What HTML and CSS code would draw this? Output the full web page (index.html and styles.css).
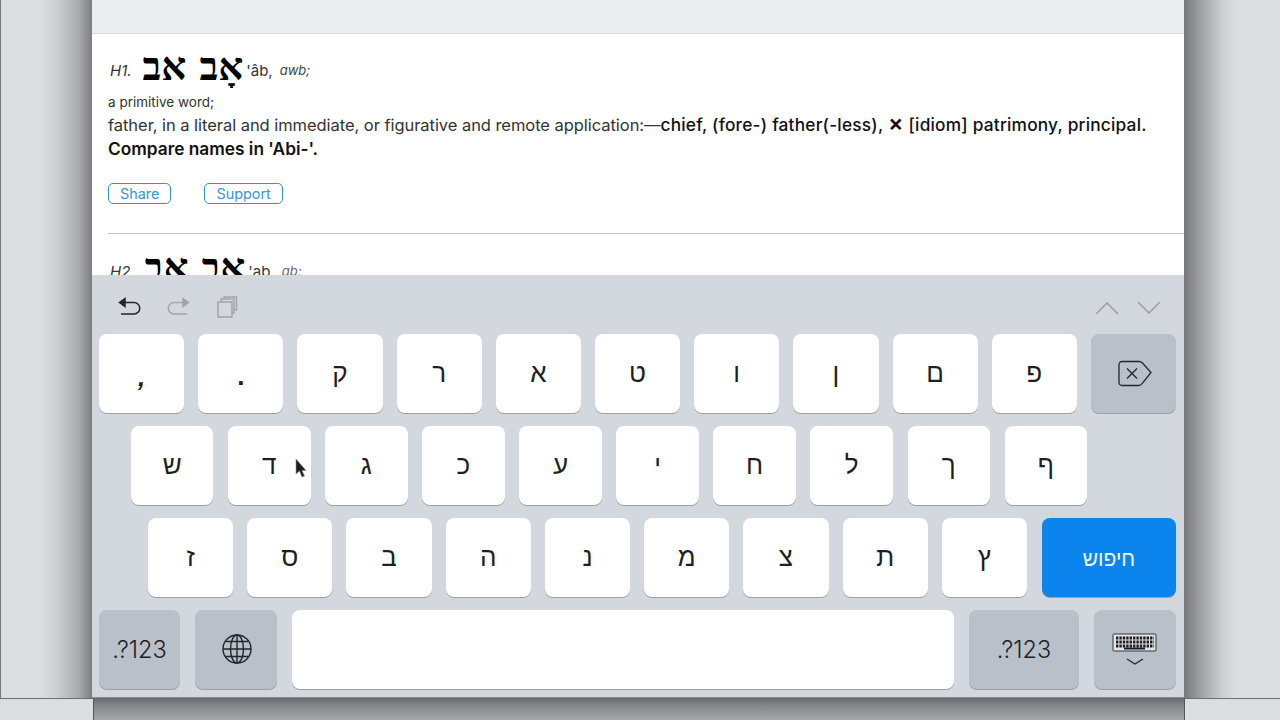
FILE: index.html
```html
<!DOCTYPE html>
<html lang="en">
<head>
<meta charset="utf-8">
<title>Hebrew lexicon</title>
<link rel="stylesheet" href="styles.css">
</head>
<body>
<div class="page">
  <div class="upper">
    <div class="gutter gutter-left"></div>
    <main class="window">
      <section class="results">
        <div class="search-strip"></div>
        <article class="entry entry-first">
          <h2 class="headword">
            <span class="ref">H1.</span>
            <span class="hebrew"><span>אב</span><span>אָב</span></span>
            <span class="translit">'âb,</span>
            <span class="pron">awb;</span>
          </h2>
          <p class="origin">a primitive word;</p>
          <p class="definition">father, in a literal and immediate, or figurative and remote application:—<span class="usage">chief, (fore-) father(-less), <span class="mult">×</span> [idiom] patrimony, principal.</span> <strong>Compare names in 'Abi-'.</strong></p>
          <div class="actions">
            <a class="pill pill-share">Share</a>
            <a class="pill pill-support">Support</a>
          </div>
        </article>
        <article class="entry entry-second">
          <h2 class="headword">
            <span class="ref">H2.</span>
            <span class="hebrew"><span>אב</span><span>אב</span></span>
            <span class="translit">'ab,</span>
            <span class="pron">ab;</span>
          </h2>
        </article>
      </section>
      <section class="keyboard">
        <div class="toolbar">
          <div class="tool-group">
            <svg class="tool" width="26" height="26" viewBox="0 0 26 26" fill="none" stroke="#23262b" stroke-width="1.5"><path d="M4 8.500H18a5.500 5.500 0 0 1 0 11.500H5"/><path d="M9 4.500 3.500 8.500 9 12.500z" fill="#23262b"/></svg>
            <svg class="tool" width="26" height="26" viewBox="0 0 26 26" fill="none" stroke="#a2a5aa" stroke-width="1.5"><path d="M22 8.500H8a5.500 5.500 0 0 0 0 11.500H21"/><path d="M17 4.500 22.500 8.500 17 12.500z" fill="#a2a5aa"/></svg>
            <svg class="tool tool-copy" width="26" height="26" viewBox="0 0 26 26" fill="none" stroke="#a2a5aa" stroke-width="1.5"><rect x="4" y="8" width="14" height="15"/><path d="M7 8V5H20V19H18M10 5V3H22.500V16H20"/></svg>
          </div>
          <div class="tool-group tool-group-nav">
            <svg width="26" height="16" viewBox="0 0 26 16" fill="none" stroke="#9b9ea4" stroke-width="1.5"><path d="M2 14 13 3 24 14"/></svg>
            <svg width="26" height="16" viewBox="0 0 26 16" fill="none" stroke="#9b9ea4" stroke-width="1.5"><path d="M2 2 13 13 24 2"/></svg>
          </div>
        </div>
        <div class="key-row row-one">
          <button class="key key-comma">,</button>
          <button class="key key-period">.</button>
          <button class="key">ק</button>
          <button class="key">ר</button>
          <button class="key">א</button>
          <button class="key">ט</button>
          <button class="key">ו</button>
          <button class="key">ן</button>
          <button class="key">ם</button>
          <button class="key">פ</button>
          <button class="key key-alt key-delete">
            <svg width="36" height="28" viewBox="0 0 36 28" fill="none" stroke="#23262b" stroke-width="1.300"><path d="M2 5a3 3 0 0 1 3-3H22Q24 2 25.500 3.500L34 13 25.500 23.500Q24 26 22 26H5a3 3 0 0 1-3-3z" transform="translate(0 -.5)"/><path d="M10 8.500 20 18.500M20 8.500 10 18.500"/></svg>
          </button>
        </div>
        <div class="key-row row-two">
          <button class="key">ש</button>
          <button class="key">ד</button>
          <button class="key">ג</button>
          <button class="key">כ</button>
          <button class="key">ע</button>
          <button class="key">י</button>
          <button class="key">ח</button>
          <button class="key">ל</button>
          <button class="key">ך</button>
          <button class="key">ף</button>
        </div>
        <div class="key-row row-three">
          <button class="key">ז</button>
          <button class="key">ס</button>
          <button class="key">ב</button>
          <button class="key">ה</button>
          <button class="key">נ</button>
          <button class="key">מ</button>
          <button class="key">צ</button>
          <button class="key">ת</button>
          <button class="key">ץ</button>
          <button class="key key-search">חיפוש</button>
        </div>
        <div class="key-row row-four">
          <button class="key key-alt key-num">.?123</button>
          <button class="key key-alt key-globe">
            <svg width="32" height="32" viewBox="0 0 32 32" fill="none" stroke="#23262b" stroke-width="1.400"><circle cx="16" cy="16" r="14"/><ellipse cx="16" cy="16" rx="6.500" ry="14"/><path d="M16 2V30M2 16H30M5 8.500H27M5 23.500H27"/></svg>
          </button>
          <button class="key key-space" aria-label="space"></button>
          <button class="key key-alt key-num key-num-wide">.?123</button>
          <button class="key key-alt key-hide">
            <svg width="46" height="34" viewBox="0 0 46 34" fill="none"><rect x="1" y="1" width="43" height="17" rx="1" fill="#e3e5e8" stroke="#33363b"/><path d="M4 5H42M4 9H42M4 13H42" stroke="#1c1e22" stroke-width="3" stroke-dasharray="2.400 1"/><path d="M12 15.500H33" stroke="#1c1e22" stroke-width="2"/><path d="M15 26 23 31 31 26" stroke="#23262b" stroke-width="1.300"/></svg>
          </button>
        </div>
        <svg class="pointer" width="14" height="22" viewBox="0 0 14 22"><path d="M2 1 2 16 5.500 13 8 19 10.500 18 8 12.500 12 12.500z" fill="#1b1d22" stroke="#8d8f94" stroke-width=".6"/></svg>
      </section>
    </main>
    <div class="gutter gutter-right"></div>
  </div>
  <div class="lower">
    <div class="lower-cell lower-left"></div>
    <div class="lower-shadow"></div>
    <div class="lower-cell lower-right"></div>
  </div>
</div>
</body>
</html>
```
FILE: styles.css
```css
* { box-sizing: border-box; }

html, body {
  margin: 0;
  padding: 0;
  width: 1280px;
  height: 720px;
  overflow: hidden;
}

body {
  font-family: Inter, "Liberation Sans", sans-serif;
  background: #dcdde1;
  color: #222;
}

.page {
  width: 1280px;
  height: 720px;
  display: flex;
  flex-direction: column;
}

.upper {
  height: 698px;
  display: flex;
}

.gutter { height: 698px; }

.gutter-left {
  width: 92px;
  border-left: 1px solid #77797d;
  background: linear-gradient(90deg, #dcdde1 0, #dcdde1 38px, #cfd0d3 55px, #a8a9ac 78px, #7d7e81 91px);
}

.gutter-right {
  width: 96px;
  background: linear-gradient(270deg, #dcdde1 0, #dcdde1 46px, #c9cacc 60px, #a3a4a7 78px, #76777a 96px);
}

.window {
  width: 1092px;
  height: 698px;
  display: flex;
  flex-direction: column;
  border-bottom: 1px solid #8b8c90;
  background: #fff;
}

.results {
  height: 275px;
  overflow: hidden;
  background: #fff;
}

.search-strip {
  height: 34px;
  background: #ecedf1;
  border-bottom: 1px solid #d9d9dc;
}

.entry { margin: 0 0 0 16px; }

.entry-first {
  height: 200px;
  padding-top: 14px;
  border-bottom: 1px solid #c6c6c8;
}

.entry-second { padding-top: 15px; }

.headword {
  margin: 0;
  height: 44px;
  display: flex;
  align-items: center;
  font-weight: 400;
  font-size: 15px;
  color: #222;
}

.ref {
  font-style: italic;
  margin-left: 2px;
  margin-right: 11px;
  color: #333;
}

.entry-second .ref { margin-right: 10px; }

.hebrew {
  font-family: "Liberation Serif", "DejaVu Serif", serif;
  font-weight: 700;
  font-size: 39px;
  line-height: 44px;
  color: #000;
  margin-right: 3px;
  margin-bottom: 6px;
  display: flex;
  gap: 13px;
}

.translit { margin-right: 7px; color: #333; }

.pron {
  font-size: 13px;
  font-style: italic;
  color: #444;
}

.entry-second .pron { color: #666; }

.origin {
  margin: 0;
  font-size: 13.500px;
  line-height: 20px;
  color: #333;
}

.definition {
  margin: 1px 0 0;
  padding-right: 30px;
  font-size: 16.500px;
  line-height: 24px;
  letter-spacing: -0.05px;
  color: #333;
}

.usage {
  font-weight: 500;
  font-size: 17.300px;
  letter-spacing: 0.210px;
  color: #111;
}

.definition strong {
  font-weight: 600;
  font-size: 17.300px;
  letter-spacing: 0;
  color: #111;
}

.mult { font-size: 23px; line-height: 20px; font-weight: 600; }

.actions {
  margin-top: 22px;
  display: flex;
  gap: 33px;
}

.pill {
  height: 21px;
  padding: 0 11px;
  border: 1px solid #2f93cf;
  border-radius: 5px;
  font-size: 14.400px;
  line-height: 19px;
  color: #3a97d3;
}

.keyboard {
  position: relative;
  flex: 1;
  background: #d3d7de;
  display: flex;
  flex-direction: column;
  gap: 13px;
}

.toolbar {
  height: 46px;
  padding: 19px 22px 0 24px;
  display: flex;
  justify-content: space-between;
  align-items: flex-start;
}

.tool-group {
  display: flex;
  gap: 24px;
  align-items: center;
}

.tool-group-nav { gap: 16px; margin-top: 6px; }

.tool { display: block; }

.tool-copy { margin-left: -2px; }

.key-row {
  height: 79px;
  display: flex;
  gap: 14px;
  flex: none;
}

.row-one { padding: 0 8px 0 7px; }
.row-two { padding: 0 97px 0 39px; gap: 14.600px; }
.row-three { padding: 0 8px 0 56px; }
.row-four { padding: 0 8px 0 7px; gap: 15px; }

.key {
  flex: 1 1 0;
  min-width: 0;
  margin: 0;
  padding: 0;
  border: 0;
  border-radius: 8px;
  background: #fff;
  box-shadow: 0 1px 0 #9d9fa5;
  font-family: "Liberation Sans", "DejaVu Sans", sans-serif;
  font-size: 26px;
  font-weight: 400;
  color: #1d1f23;
  display: flex;
  align-items: center;
  justify-content: center;
}

.key-comma { padding-top: 8px; font-weight: 700; font-style: italic; }
.key-period { padding-top: 6px; font-weight: 700; }

.key-alt { background: #b9c0ca; }

.key-delete svg { margin-left: 3px; }

.key-search {
  flex: 0 0 134px;
  margin-left: 1px;
  padding-top: 2px;
  background: #0b84ee;
  color: #f2f8fe;
  font-size: 21px;
}

.key-num {
  font-family: Inter, "Liberation Sans", sans-serif;
  font-size: 23.500px;
  font-weight: 300;
  flex: 0 0 81px;
}

.key-globe { flex: 0 0 82px; }
.key-globe svg { margin: -1px 0 0 2px; }
.key-space { flex: 1 1 0; }
.key-num-wide { flex: 0 0 110px; }
.key-hide { flex: 0 0 82px; }

.pointer {
  position: absolute;
  left: 202px;
  top: 183px;
}

.lower {
  height: 22px;
  display: flex;
}

.lower-cell {
  background: #dcdde1;
  border-top: 1px solid #6c6d71;
}

.lower-left {
  width: 94px;
  border-right: 1px solid #55565a;
}

.lower-right {
  width: 96px;
  border-left: 1px solid #55565a;
}

.lower-shadow {
  flex: 1;
  background: linear-gradient(180deg, #6b6c70 0, #8b8c90 10px, #a5a6a9 22px);
}
```
